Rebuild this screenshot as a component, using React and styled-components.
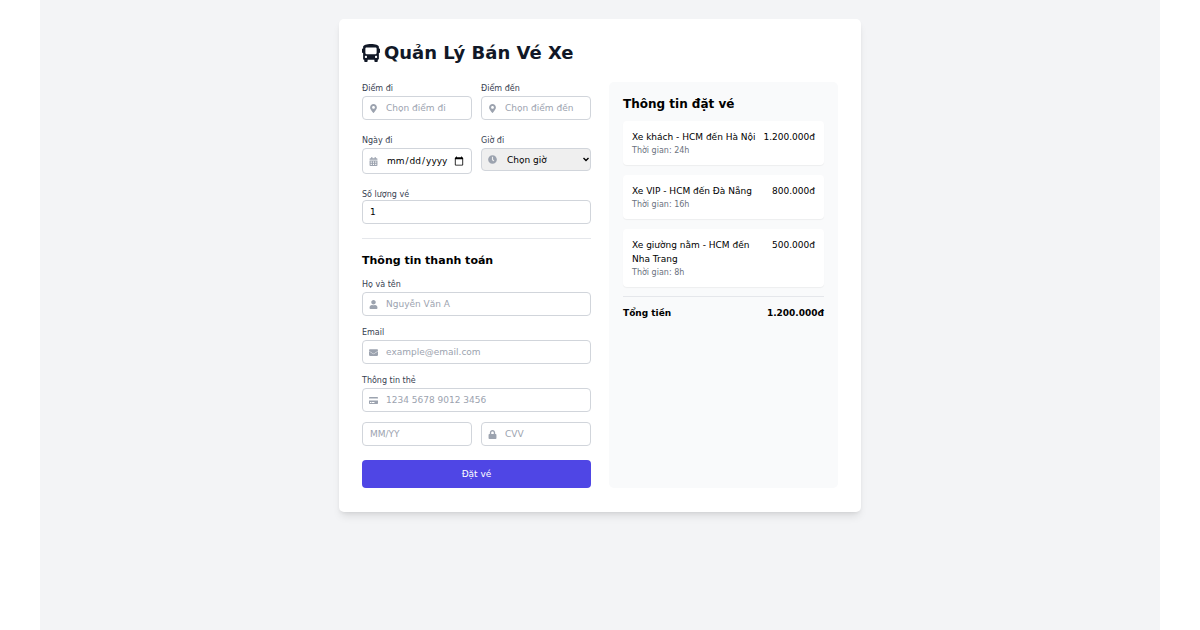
import React, {useState} from 'react'
import styled, {createGlobalStyle, css} from 'styled-components'
import {
  FaBus,
  FaMapMarkerAlt,
  FaCalendarAlt,
  FaClock,
  FaUser,
  FaEnvelope,
  FaCreditCard,
  FaLock
} from 'react-icons/fa'

const GlobalStyle = createGlobalStyle`
  *, *::before, *::after {
    box-sizing: border-box;
  }
  body {
    margin: 0;
    background-color: white;
    color: black;
    font-family: "DejaVu Sans", sans-serif;
    font-size: 9px;
    line-height: 14px;
  }
  h1, h2, h3, p {
    margin: 0;
  }
  input, select, button {
    margin: 0;
    font-family: inherit;
    font-size: inherit;
    line-height: inherit;
    color: inherit;
  }
`

const Page = styled.div`
  min-height: 100vh;
  margin: 0 40px;
  padding: 19px;
  background-color: #f3f4f6;
`

const Card = styled.main`
  max-width: 522px;
  margin: 0 auto;
  padding: 23px 23px 24px;
  background-color: white;
  border-radius: 5px;
  box-shadow: 0 6px 9px -2px rgba(0, 0, 0, 0.1), 0 2px 4px -2px rgba(0, 0, 0, 0.1);
`

const Title = styled.h1`
  display: flex;
  align-items: center;
  gap: 4px;
  margin-bottom: 19px;
  font-size: 18px;
  line-height: 21px;
  color: #111827;
`

const Columns = styled.div`
  display: grid;
  grid-template-columns: repeat(2, minmax(0, 1fr));
  gap: 18px;

  @media (max-width: 480px) {
    grid-template-columns: 1fr;
  }
`

const Form = styled.form`
  display: flex;
  flex-direction: column;
  gap: 14px;
`

const Row = styled.div`
  display: grid;
  grid-template-columns: repeat(2, minmax(0, 1fr));
  gap: 9px;
`

const Payment = styled.section`
  display: flex;
  flex-direction: column;
  gap: 10px;
  padding-top: 14px;
  border-top: 1px solid #e5e7eb;
`

const SectionTitle = styled.h2`
  font-size: 12px;
  line-height: 16px;
  margin-bottom: 9px;
  ${(props) =>
    props.$small &&
    css`
      font-size: 11px;
      line-height: 15px;
      margin-bottom: 0;
  `}
`

const Label = styled.label`
  display: block;
  margin-bottom: ${(props) => props.$tight ? "-2px" : "0"};
  font-size: 8px;
  line-height: 14px;
  color: #374151;
`

const Control = styled.div`
  position: relative;
`

const FieldIcon = styled.span`
  position: absolute;
  top: 0;
  bottom: 0;
  left: 7px;
  width: 9px;
  display: flex;
  align-items: center;
  justify-content: center;
  font-size: 9px;
  color: #9ca3af;
  pointer-events: none;
`

const Chevron = styled.svg`
  position: absolute;
  top: 9px;
  right: 2px;
  width: 6px;
  height: 5px;
  pointer-events: none;
`

const controlStyle = css`
  display: block;
  width: 100%;
  border: 1px solid #d1d5db;
  border-radius: 4px;
  padding: 0 7px;
  ${(props) =>
    props.$icon &&
    css`
      padding-left: 23px;
  `}
`

const Input = styled.input`
  ${controlStyle}
  height: ${(props) => props.type === "date" ? "26px" : "24px"};
  background-color: white;

  &::placeholder {
    color: #9ca3af;
    opacity: 1;
  }

  &::-webkit-calendar-picker-indicator {
    width: 10px;
    height: 10px;
    margin: 0;
    padding: 0;
    background-size: 10px 10px;
  }
`

const Select = styled.select`
  ${controlStyle}
  height: 23px;
  padding-left: 25px;
  appearance: none;
  background-color: #efefef;
`

const SubmitButton = styled.button`
  height: 28px;
  border: 0;
  border-radius: 4px;
  background-color: #4f46e5;
  color: white;
  cursor: pointer;
`

const Summary = styled.aside`
  padding: 14px;
  background-color: #f9fafb;
  border-radius: 5px;
`

const Tickets = styled.div`
  display: flex;
  flex-direction: column;
  gap: 10px;
`

const Ticket = styled.div`
  display: flex;
  justify-content: space-between;
  align-items: flex-start;
  gap: 4px;
  padding: 9px 9px 7px;
  background-color: white;
  border-radius: 4px;
  box-shadow: 0 1px 1px rgba(0, 0, 0, 0.05);
`

const Duration = styled.p`
  font-size: 8px;
  line-height: 14px;
  color: #6b7280;
`

const Total = styled.div`
  display: flex;
  justify-content: space-between;
  margin-top: 9px;
  padding-top: 9px;
  border-top: 1px solid #e5e7eb;
  font-weight: bold;
`

const tickets = [
  {name: "Xe khách - HCM đến Hà Nội", time: "24h", price: "1.200.000đ"},
  {name: "Xe VIP - HCM đến Đà Nẵng", time: "16h", price: "800.000đ"},
  {name: "Xe giường nằm - HCM đến Nha Trang", time: "8h", price: "500.000đ"}
]

const Field = ({id, label, tight, icon, children, ...rest}) => (
  <div>
    {label && <Label htmlFor={id} $tight={tight}>{label}</Label>}
    <Control>
      {children || <Input id={id} $icon={!!icon} {...rest} />}
      {icon && <FieldIcon>{icon}</FieldIcon>}
    </Control>
  </div>
)

const App = () => {
  const [quantity, setQuantity] = useState(1)

  const quantityHandler = (e) => {
    setQuantity(e.target.value)
  }

  return (
    <>
      <GlobalStyle />
      <Page>
        <Card>
          <Title><FaBus />Quản Lý Bán Vé Xe</Title>
          <Columns>
            <Form onSubmit={(e) => e.preventDefault()}>
              <Row>
                <Field id="from" label="Điểm đi" type="text" placeholder="Chọn điểm đi" icon={<FaMapMarkerAlt />} />
                <Field id="to" label="Điểm đến" type="text" placeholder="Chọn điểm đến" icon={<FaMapMarkerAlt />} />
              </Row>
              <Row>
                <Field id="date" label="Ngày đi" type="date" icon={<FaCalendarAlt />} />
                <Field id="time" label="Giờ đi" icon={<FaClock />}>
                  <Select id="time">
                    <option>Chọn giờ</option>
                    <option>08:00</option>
                    <option>12:00</option>
                    <option>18:00</option>
                  </Select>
                  <Chevron viewBox="0 0 6 5" fill="none" stroke="black" strokeWidth="1.4">
                    <path d="M0.5 1L3 3.5L5.5 1" />
                  </Chevron>
                </Field>
              </Row>
              <Field id="quantity" label="Số lượng vé" tight type="number" min="1" value={quantity} onChange={quantityHandler} />
              <Payment>
                <SectionTitle $small>Thông tin thanh toán</SectionTitle>
                <Field id="name" label="Họ và tên" type="text" placeholder="Nguyễn Văn A" icon={<FaUser />} />
                <Field id="email" label="Email" type="email" placeholder="example@email.com" icon={<FaEnvelope />} />
                <Field id="card" label="Thông tin thẻ" type="text" placeholder="1234 5678 9012 3456" icon={<FaCreditCard />} />
                <Row>
                  <Field id="expiry" type="text" placeholder="MM/YY" aria-label="MM/YY" />
                  <Field id="cvv" type="text" placeholder="CVV" aria-label="CVV" icon={<FaLock />} />
                </Row>
              </Payment>
              <SubmitButton type="submit">Đặt vé</SubmitButton>
            </Form>
            <Summary>
              <SectionTitle>Thông tin đặt vé</SectionTitle>
              <Tickets>
                {tickets.map((ticket) => (
                  <Ticket key={ticket.name}>
                    <div>
                      <p>{ticket.name}</p>
                      <Duration>Thời gian: {ticket.time}</Duration>
                    </div>
                    <span>{ticket.price}</span>
                  </Ticket>
                ))}
              </Tickets>
              <Total>
                <span>Tổng tiền</span>
                <span>1.200.000đ</span>
              </Total>
            </Summary>
          </Columns>
        </Card>
      </Page>
    </>
  )
}

export default App
